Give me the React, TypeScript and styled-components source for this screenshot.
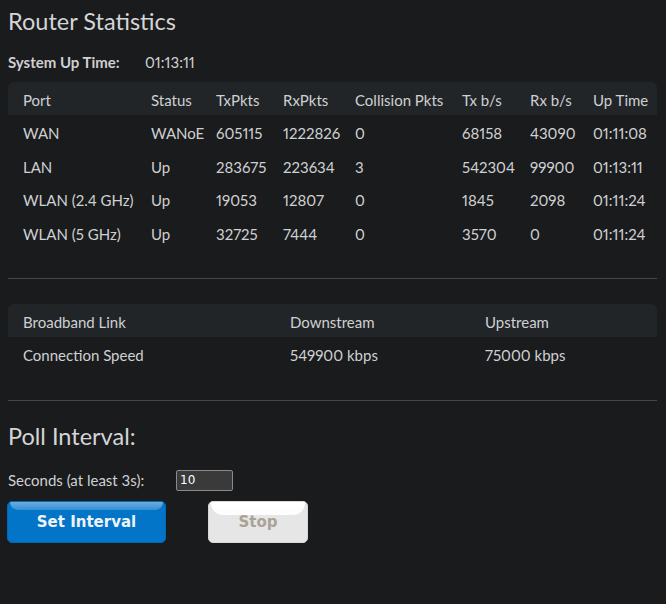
import styled, { createGlobalStyle } from "styled-components";

const Global = createGlobalStyle`
  html, body { margin: 0; padding: 0; background: #1a1b1d; }
  body {
    font-family: Lato, "Open Sans", sans-serif;
    color: #cfd0d2;
    font-variant-numeric: proportional-nums;
  }
`;

const Page = styled.div`
  width: 666px;
  height: 604px;
  padding: 0 9px 0 8px;
  box-sizing: border-box;
  background: #1a1b1d;
`;

const Title = styled.h1`
  margin: 0;
  padding-top: 6px;
  font-size: 23.5px;
  font-weight: 400;
  line-height: 30px;
  color: #d4d5d7;
`;

const UpTime = styled.div`
  display: flex;
  align-items: center;
  height: 26px;
  margin-top: 13px;
  font-size: 15px;
  span:first-child { font-weight: 700; width: 137px; }
`;

const Table = styled.div<{ $top: number }>`
  margin-top: ${(p) => p.$top}px;
`;

const Row = styled.div<{ $cols: string; $head?: boolean }>`
  display: grid;
  grid-template-columns: ${(p) => p.$cols};
  align-items: center;
  height: ${(p) => (p.$head ? 33 : 33.5)}px;
  padding: 3px 0 0 15px;
  box-sizing: border-box;
  font-size: 15px;
  background: ${(p) => (p.$head ? "#222528" : "transparent")};
  border-radius: ${(p) => (p.$head ? "6px 6px 0 0" : "0")};
  white-space: nowrap;
`;

const Rule = styled.hr<{ $top: number }>`
  border: 0;
  height: 1px;
  background: #46474a;
  margin: ${(p) => p.$top}px 0 0;
`;

const SubTitle = styled.h2`
  margin: 20px 0 0;
  font-size: 23.5px;
  font-weight: 400;
  line-height: 30px;
  color: #d4d5d7;
`;

const Field = styled.label`
  display: flex;
  align-items: center;
  margin-top: 19px;
  font-size: 15px;
  span { width: 168px; }
`;

const Input = styled.input`
  width: 57px;
  height: 21px;
  box-sizing: border-box;
  background: #3a3a3b;
  border: 1px solid #8a8a8a;
  border-radius: 2px;
  color: #fff;
  font-family: "DejaVu Sans", sans-serif;
  font-size: 12px;
  padding: 0 3px;
`;

const Buttons = styled.div`
  display: flex;
  gap: 42px;
  margin-top: 10px;
  margin-left: -1px;
`;

const Button = styled.button<{ $primary?: boolean; $w: number }>`
  position: relative;
  overflow: hidden;
  width: ${(p) => p.$w}px;
  height: 42px;
  border-radius: 5px;
  border: 1px solid ${(p) => (p.$primary ? "#0068b4" : "#d8d8d8")};
  background: ${(p) => (p.$primary ? "#0275c8" : "#e6e6e6")};
  color: ${(p) => (p.$primary ? "#eef3f8" : "#aba297")};
  font-family: "DejaVu Sans", sans-serif;
  font-weight: 700;
  font-size: 15px;
  padding: 0;
  &::before {
    content: "";
    position: absolute;
    left: 2px;
    right: 2px;
    top: 0;
    height: ${(p) => (p.$primary ? 8 : 13)}px;
    border-radius: 0 0 ${(p) => (p.$primary ? "8px 8px" : "12px 12px")};
    background: ${(p) =>
      p.$primary
        ? "linear-gradient(#6aaee0, #3590d5)"
        : "linear-gradient(#ffffff, #fdfdfd)"};
  }
  span { position: relative; }
`;

const portCols = "128px 65px 67px 72px 107px 68px 63px 1fr";
const linkCols = "267px 195px 1fr";

const ports = [
  ["Port", "Status", "TxPkts", "RxPkts", "Collision Pkts", "Tx b/s", "Rx b/s", "Up Time"],
  ["WAN", "WANoE", "605115", "1222826", "0", "68158", "43090", "01:11:08"],
  ["LAN", "Up", "283675", "223634", "3", "542304", "99900", "01:13:11"],
  ["WLAN (2.4 GHz)", "Up", "19053", "12807", "0", "1845", "2098", "01:11:24"],
  ["WLAN (5 GHz)", "Up", "32725", "7444", "0", "3570", "0", "01:11:24"],
];

const links = [
  ["Broadband Link", "Downstream", "Upstream"],
  ["Connection Speed", "549900 kbps", "75000 kbps"],
];

export default function App() {
  return (
    <Page>
      <Global />
      <Title>Router Statistics</Title>
      <UpTime>
        <span>System Up Time:</span>
        <span>01:13:11</span>
      </UpTime>
      <Table $top={7}>
        {ports.map((r, i) => (
          <Row key={i} $cols={portCols} $head={i === 0}>
            {r.map((c, j) => (
              <span key={j}>{c}</span>
            ))}
          </Row>
        ))}
      </Table>
      <Rule $top={29} />
      <Table $top={25}>
        {links.map((r, i) => (
          <Row key={i} $cols={linkCols} $head={i === 0}>
            {r.map((c, j) => (
              <span key={j}>{c}</span>
            ))}
          </Row>
        ))}
      </Table>
      <Rule $top={29} />
      <SubTitle>Poll Interval:</SubTitle>
      <Field>
        <span>Seconds (at least 3s):</span>
        <Input defaultValue="10" />
      </Field>
      <Buttons>
        <Button $primary $w={159}>
          <span>Set Interval</span>
        </Button>
        <Button $w={100}>
          <span>Stop</span>
        </Button>
      </Buttons>
    </Page>
  );
}
